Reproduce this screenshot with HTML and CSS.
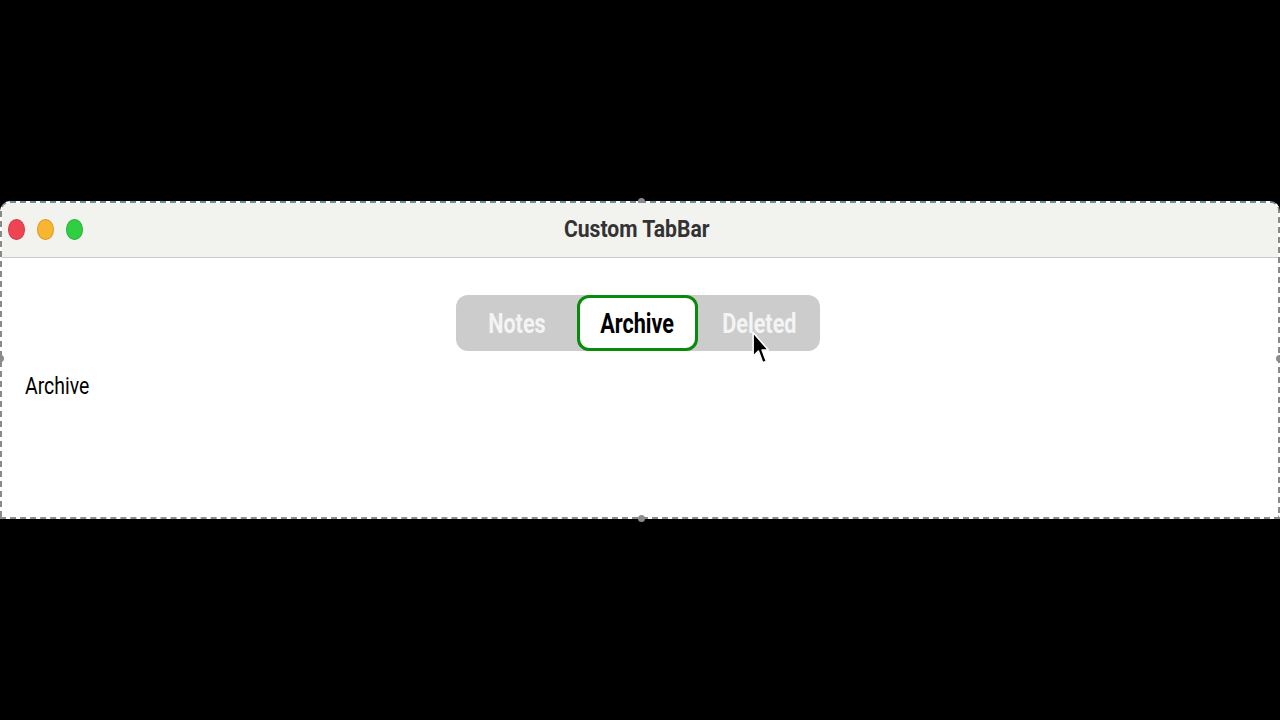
FILE: index.html
```html
<!DOCTYPE html>
<html lang="en">
<head>
<meta charset="utf-8">
<title>Custom TabBar</title>
<link rel="stylesheet" href="styles.css">
</head>
<body>
  <div class="window">
    <span class="handle handle-top"></span>
    <span class="handle handle-left"></span>
    <span class="handle handle-right"></span>
    <span class="handle handle-bottom"></span>
    <header class="titlebar">
      <div class="lights">
        <span class="light red"></span>
        <span class="light yellow"></span>
        <span class="light green"></span>
      </div>
      <h1 class="title"><span class="narrow">Custom TabBar</span></h1>
    </header>
    <main class="content">
      <nav class="tabbar">
        <button class="tab"><span class="narrow">Notes</span></button>
        <button class="tab active"><span class="narrow">Archive</span></button>
        <button class="tab"><span class="narrow">Deleted</span></button>
      </nav>
      <p class="page-label"><span class="narrow">Archive</span></p>
      <svg class="cursor" width="18" height="36" viewBox="0 0 16 34">
        <path d="M1.5 1.5 L1.5 24 L6.5 19 L10.5 30 L14 28.5 L10 18 L16 18 Z" fill="#000" stroke="#fff" stroke-width="1.5" stroke-linejoin="round"/>
      </svg>
    </main>
  </div>
</body>
</html>
```
FILE: styles.css
```css
html, body {
  margin: 0;
  padding: 0;
}

body {
  background: #000;
  height: 720px;
  display: flex;
  align-items: center;
  font-family: Roboto, "Liberation Sans", sans-serif;
}

.window {
  position: relative;
  box-sizing: border-box;
  width: 1280px;
  height: 318px;
  display: flex;
  flex-direction: column;
  background: #fff;
  border: 2px dashed #8a8a8a;
  border-top-color: #6f8f96;
  border-radius: 10px 10px 0 0;
}

.handle {
  position: absolute;
  width: 7px;
  height: 7px;
  border-radius: 50%;
  background: #8c8c8c;
}
.handle-top { top: -5px; left: 636px; }
.handle-bottom { bottom: -5px; left: 636px; }
.handle-left { left: -5px; top: 152px; }
.handle-right { right: -5px; top: 152px; }

.narrow {
  display: inline-block;
  white-space: nowrap;
}

.titlebar {
  position: relative;
  height: 54px;
  flex: none;
  display: flex;
  align-items: center;
  justify-content: center;
  background: #f2f2ef;
  border-bottom: 1px solid #c9c9c9;
  border-radius: 8px 8px 0 0;
}

.lights {
  position: absolute;
  left: 6px;
  top: 16px;
  display: flex;
  gap: 12px;
}

.light {
  width: 17px;
  height: 21px;
  border-radius: 50%;
  box-sizing: border-box;
}
.light.red { background: #ef4552; border: 1px solid #d2384a; }
.light.yellow { background: #f7b530; border: 1px solid #dc9c26; }
.light.green { background: #2fcf41; border: 1px solid #26b338; }

.title {
  margin: 0;
  font-size: 24px;
  font-weight: 700;
  color: #333;
  line-height: 1;
  transform: translate(-3px, -1px);
}
.title .narrow { transform: scaleX(0.88); }

.content {
  position: relative;
  flex: 1;
  display: flex;
  flex-direction: column;
  padding-top: 37px;
}

.tabbar {
  align-self: center;
  display: grid;
  grid-template-columns: 121px 121px 122px;
  height: 56px;
  background: #cccccc;
  border-radius: 12px;
  transform: translateX(-2px);
}

.tab {
  box-sizing: border-box;
  margin: 0;
  padding: 3px 0 0;
  border: 0;
  background: transparent;
  font-family: inherit;
  font-size: 27px;
  font-weight: 700;
  line-height: 1;
  color: #f4f4f4;
  border-radius: 12px;
}
.tab .narrow { transform: scaleX(0.8); }

.tab.active {
  background: #fff;
  color: #000;
  border: 3px solid #0a8a0a;
  padding-top: 3px;
}

.page-label {
  margin: 21px 0 0 23px;
  font-size: 24px;
  line-height: 1.2;
  color: #000;
}
.page-label .narrow {
  transform: scaleX(0.81);
  transform-origin: left center;
}

.cursor {
  position: absolute;
  left: 749px;
  top: 73px;
}
```
